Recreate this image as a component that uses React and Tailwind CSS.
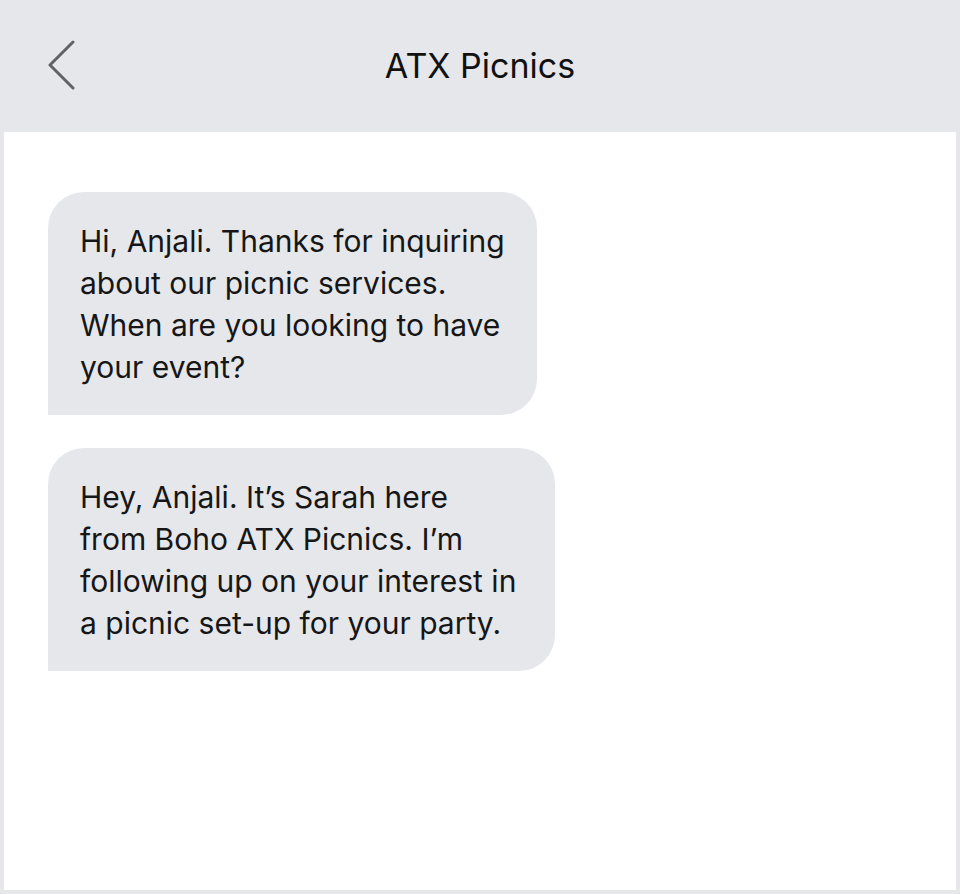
const messages = [
  {
    width: "w-[489px]",
    lines: [
      "Hi, Anjali. Thanks for inquiring",
      "about our picnic services.",
      "When are you looking to have",
      "your event?",
    ],
  },
  {
    width: "w-[507px]",
    lines: [
      "Hey, Anjali. It\u2019s Sarah here",
      "from Boho ATX Picnics. I\u2019m",
      "following up on your interest in",
      "a picnic set-up for your party.",
    ],
  },
];

const App = () => {
  return (
    <div
      className="h-[894px] w-[960px] bg-[#e5e7eb] px-1 pb-1 flex flex-col"
      style={{ fontFamily: "Inter, 'Noto Sans', sans-serif" }}
    >
      <header className="relative h-[132px] shrink-0 flex items-center justify-center">
        <button className="absolute left-[37px] top-[34px] p-1">
          <svg width="30" height="52" viewBox="0 0 30 52" fill="none">
            <path
              d="M28 4 L5 27 L28 50"
              stroke="#5f6368"
              strokeWidth="3"
              strokeLinecap="round"
              strokeLinejoin="round"
            />
          </svg>
        </button>
        <h1 className="text-[34px] text-[#111] -mt-[1px]">ATX Picnics</h1>
      </header>

      <main className="flex-1 bg-white pt-[60px] pl-[44px] flex flex-col gap-[33px]">
        {messages.map((m, i) => (
          <div
            key={i}
            className={`${m.width} bg-[#e5e7eb] rounded-[36px] rounded-bl-none px-8 pt-7 pb-[27px] text-[30px] leading-[42px] text-[#161616] whitespace-nowrap`}
          >
            {m.lines.map((line, j) => (
              <div key={j}>{line}</div>
            ))}
          </div>
        ))}
      </main>
    </div>
  );
};

export default App;
